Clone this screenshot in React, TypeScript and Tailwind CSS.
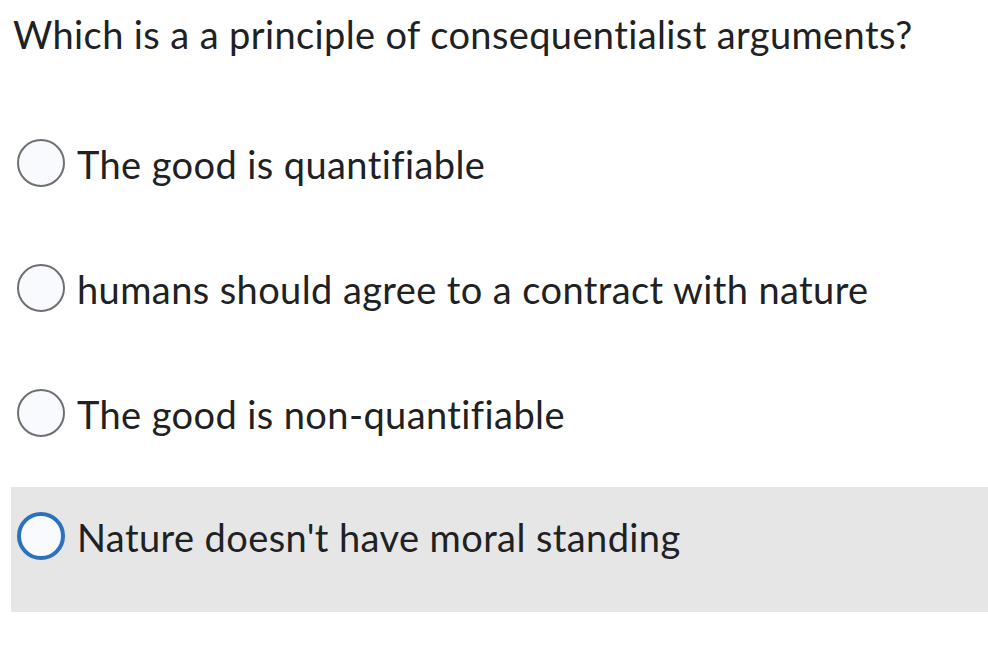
const options = [
  { label: "The good is quantifiable", selected: false },
  { label: "humans should agree to a contract with nature", selected: false },
  { label: "The good is non-quantifiable", selected: false },
  { label: "Nature doesn't have moral standing", selected: true },
];

function Radio({ selected }: { selected: boolean }) {
  return (
    <span
      className={
        selected
          ? "block h-[48px] w-[48px] shrink-0 rounded-full border-[4px] border-[#2b71bd] bg-[#f9fafe]"
          : "block h-[48px] w-[48px] shrink-0 rounded-full border-2 border-[#6e6f72] bg-[#f9fafe]"
      }
    />
  );
}

export default function App() {
  return (
    <div className="h-[646px] w-[988px] overflow-hidden bg-white font-['Lato',sans-serif] text-[#202122] [font-variant-ligatures:none]">
      <h1 className="h-[112px] pl-[13px] pt-[12px] text-[38px] leading-[1.2] font-normal tracking-[0.38px]">
        Which is a a principle of consequentialist arguments?
      </h1>
      <div className="ml-[11px]">
        {options.map((opt) => (
          <div
            key={opt.label}
            className={
              opt.selected
                ? "flex h-[125px] items-start gap-[12px] bg-[#e6e6e6] pl-[6px] pt-[25px]"
                : "flex h-[125px] items-start gap-[12px] pl-[6px] pt-[27px]"
            }
          >
            <Radio selected={opt.selected} />
            <span className="mt-[2px] text-[38px] leading-[46px] tracking-[0.4px]">{opt.label}</span>
          </div>
        ))}
      </div>
    </div>
  );
}
